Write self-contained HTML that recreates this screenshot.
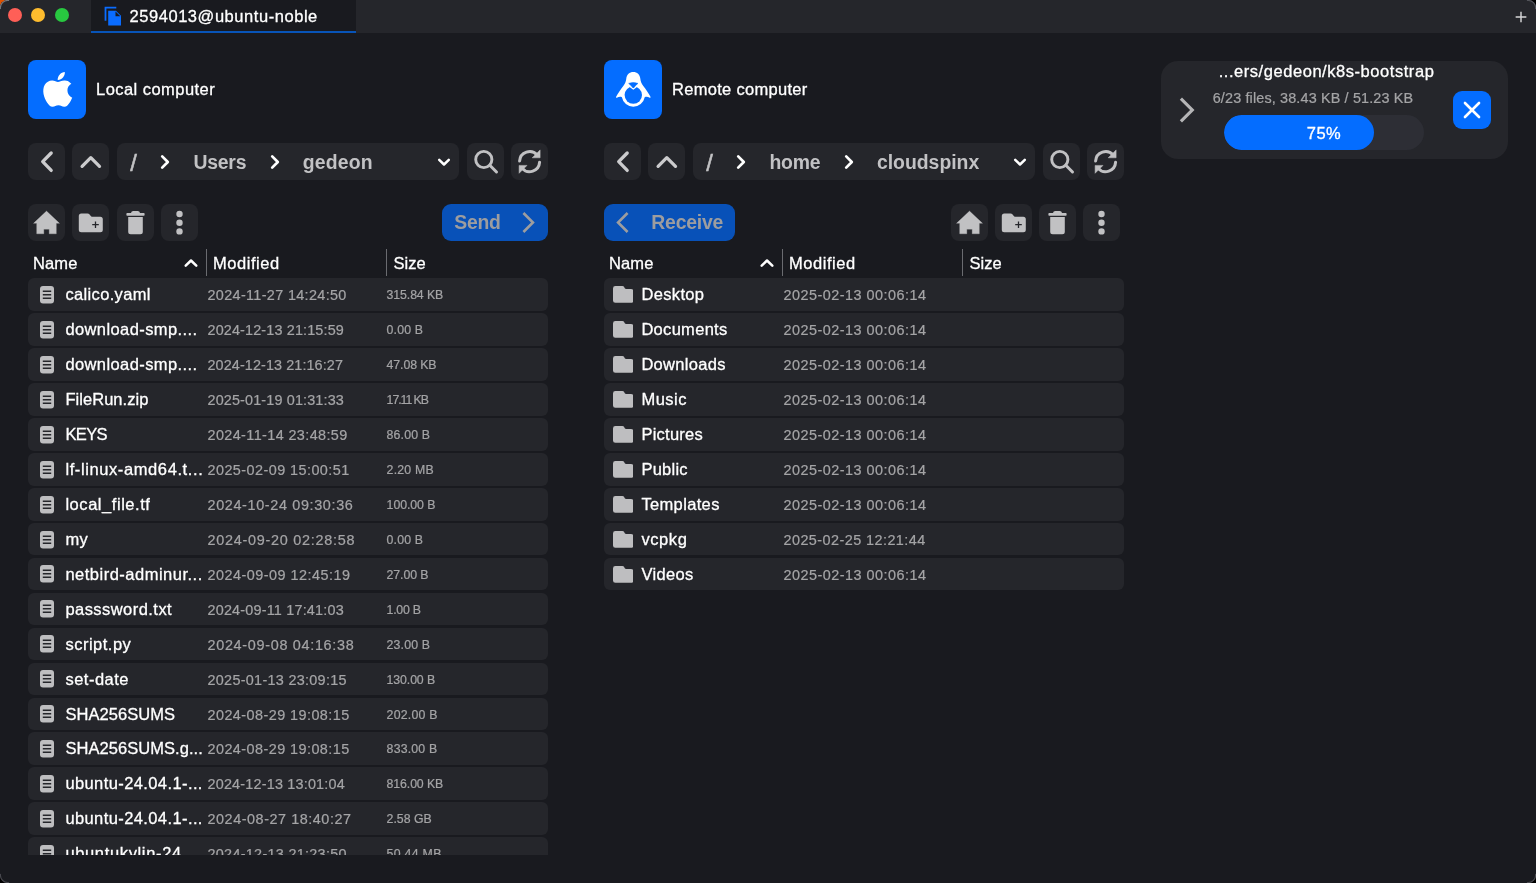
<!DOCTYPE html>
<html lang="en">
<head>
<meta charset="utf-8">
<title>2594013@ubuntu-noble</title>
<style>
*{box-sizing:border-box;margin:0;padding:0}
html,body{width:1536px;height:883px;overflow:hidden;background:#000}
body{font-family:"Liberation Sans",sans-serif;color:#fff;position:relative}
svg{display:block;fill:currentColor}
.win{position:absolute;left:0;top:0;width:1536px;height:883px;background:#191a1f;border-radius:7.5px;overflow:hidden;will-change:transform}
.corner-tl{position:absolute;left:0;top:0;width:10px;height:10px;background:#e05200}
.titlebar{position:absolute;left:0;top:0;width:1536px;height:33px;background:#25262b}
.tl{position:absolute;top:8px;width:14px;height:14px;border-radius:50%}
.tl.r{left:8px;background:#ff5f57}
.tl.y{left:31px;background:#febc2e}
.tl.g{left:55px;background:#28c840}
.tab{position:absolute;left:91px;top:0;width:265.2px;height:33px;background:#191a1f;border-bottom:2px solid #0854b8}
.tab .ticon{position:absolute;left:13px;top:5.5px;width:18px;height:20px}
.tab .ttext{position:absolute;left:38.5px;top:-.4px;line-height:32px;font-size:16.5px;white-space:nowrap}
.plus{position:absolute;left:1513.5px;top:9.8px;width:14px;height:14px;fill:none;stroke:#d6d6d8;stroke-width:1.45}

.panel{position:absolute;top:60px;width:520px}
.panel.l{left:28px}
.panel.r{left:604px}
.os{position:absolute;left:0;top:.3px;width:58.4px;height:58.5px;border-radius:8px;background:#046dff}
.oslabel{position:absolute;left:68px;top:.2px;line-height:58px;font-size:16.5px;white-space:nowrap}
.btn{position:absolute;width:37px;height:37px;border-radius:8px;background:#25262b;color:#c1c1c3}
.btn svg{position:absolute}
.nav{position:absolute;left:0;top:83.3px;width:520px;height:37px}
.pathbox{position:absolute;left:88.6px;top:0;width:342.6px;height:37px;border-radius:8px;background:#25262b;color:#c2c2c4;font-weight:700;font-size:19.4px;line-height:37px;white-space:nowrap}
.pathbox span{position:absolute;top:.5px}
.pathbox .sl{font-size:23.7px;top:1.7px;font-weight:400;-webkit-text-stroke:.55px currentColor}
.pathbox svg{position:absolute;color:#fff}
.tools{position:absolute;left:0;top:143.8px;width:520px;height:37px}
.xfer{position:absolute;top:0;height:37px;border-radius:9px;background:#0851b8;color:#9d9d9f;font-weight:700;font-size:19.4px;line-height:37px;white-space:nowrap}
.xfer span{position:absolute;top:0}
.xfer svg{position:absolute}
.hdr{position:absolute;left:0;top:189px;width:520px;height:27px;font-size:16.5px;line-height:27px;white-space:nowrap}
.hdr span{position:absolute;top:.6px}
.hdr i{position:absolute;top:0;width:1.5px;height:27px;background:#6a6b70}
.hdr svg{position:absolute;color:#fff}
.list{position:absolute;left:0;top:218.3px;width:520px;height:577px;overflow:hidden}
.row{position:relative;height:32.6px;margin-bottom:2.35px;border-radius:6px;background:#25262b;white-space:nowrap}
.row span{position:absolute;top:0;line-height:32.6px}
.fi{left:11.7px;top:7.7px !important;width:14px;height:18px;color:#bebec0}
.fo{left:8.7px;top:8.2px !important;width:20.4px;height:16.8px;color:#bebec0}
.nm{left:37.4px;font-size:16.5px}
.dt{left:179.5px;top:1px !important;font-size:14.4px;color:#a4a4a6}
.sz{left:358.6px;top:1px !important;font-size:12.3px;color:#a4a4a6}

.job{position:absolute;left:1161px;top:60.6px;width:347px;height:98.8px;border-radius:17px;background:#25262b}
.job .jt{position:absolute;left:0;width:331px;top:-.6px;text-align:center;line-height:22px;font-size:16.5px;white-space:nowrap}
.job .js{position:absolute;left:0;width:304px;top:27px;text-align:center;line-height:20px;font-size:14.4px;color:#a4a4a6;white-space:nowrap}
.job .bar{position:absolute;left:63px;top:54.4px;width:200px;height:35px;border-radius:18px;background:#2d2e35;overflow:hidden}
.job .fill{position:absolute;left:0;top:0;width:150px;height:35px;border-radius:18px;background:#046dff}
.job .pct{position:absolute;left:0;top:.6px;width:200px;text-align:center;line-height:35px;font-size:16.5px}
.job .chev{position:absolute;left:11px;top:34.4px;width:30px;height:30px;color:#b5b5b7}
.job .x{position:absolute;left:292px;top:30.5px;width:38px;height:38px;border-radius:9px;background:#046dff;color:#fff}
.job .x svg{position:absolute;left:6px;top:6px;width:26px;height:26px}
.bi{left:0;top:0;width:37px;height:37px}
.rim{position:absolute;width:10px;height:10px;fill:none;stroke:rgba(170,170,178,.34);stroke-width:1.1;stroke-linecap:round}
.nm,.oslabel,.ttext,.hdr span,.job .jt,.job .pct{-webkit-text-stroke:.3px currentColor}
.dt,.sz,.job .js{-webkit-text-stroke:.22px currentColor}

</style>
</head>
<body>
<div class="corner-tl"></div>
<div class="win">
  <div class="titlebar">
    <span class="tl r"></span><span class="tl y"></span><span class="tl g"></span>
    <div class="tab">
      <svg class="ticon" viewBox="0 0 18 20"><path d="M1.500 14.800V1.650h10.800" fill="none" stroke="#0a6cff" stroke-width="1.800"/><path d="M4.200 4.700h7.800l5 5V19.500H4.200z" fill="#0a6cff"/><path d="M11.500 5.500v4.800h4.800z" fill="#191a1f"/></svg>
      <span class="ttext" style="letter-spacing:0.55px">2594013@ubuntu-noble</span>
    </div>
    <svg class="plus" viewBox="0 0 14 14"><path d="M1.650 7H12.350M7 1.650V12.350"/></svg>
  </div>

  <section class="panel l">
    <div class="os"><svg viewBox="0 0 24 24" preserveAspectRatio="none" style="position:absolute;left:11.600px;top:11.800px;width:35.500px;height:34.800px;color:#fff"><path d="M12.152 6.896c-.948 0-2.415-1.078-3.96-1.04-2.04.027-3.91 1.183-4.961 3.014-2.117 3.675-.546 9.103 1.519 12.09 1.013 1.454 2.208 3.09 3.792 3.039 1.52-.065 2.09-.987 3.935-.987 1.831 0 2.35.987 3.96.948 1.637-.026 2.676-1.48 3.676-2.948 1.156-1.688 1.636-3.325 1.662-3.415-.039-.013-3.182-1.221-3.22-4.857-.026-3.04 2.48-4.494 2.597-4.559-1.429-2.09-3.623-2.324-4.39-2.376-2-.156-3.675 1.09-4.61 1.09zM15.53 3.83c.843-1.012 1.4-2.427 1.245-3.83-1.207.052-2.662.805-3.532 1.818-.78.896-1.454 2.338-1.273 3.714 1.338.104 2.715-.688 3.559-1.701"/></svg></div>
    <div class="oslabel" style="letter-spacing:0.45px">Local computer</div>
    <div class="nav">
      <div class="btn" style="left:0"><svg viewBox="0 0 37 37" class="bi"><path d="M23.200 10 L14.700 18.700 L23.200 27.400" fill="none" stroke="#cbcbcd" stroke-width="3.300" stroke-linecap="round" stroke-linejoin="round"/></svg></div>
      <div class="btn" style="left:44.3px"><svg viewBox="0 0 37 37" class="bi"><path d="M10.100 23.300 L18.800 14.700 L27.500 23.300" fill="none" stroke="#cbcbcd" stroke-width="3.300" stroke-linecap="round" stroke-linejoin="round"/></svg></div>
      <div class="pathbox"><span class="sl" style="left:13.600px">/</span><svg style="left:36.4px;top:6.5px;width:24px;height:24px" viewBox="0 0 24 24"><path d="M9.200 6.400 L14.800 12 L9.200 17.600" fill="none" stroke="currentColor" stroke-width="2.700" stroke-linecap="round" stroke-linejoin="round"/></svg><span style="left:76.800px;letter-spacing:-0.2px">Users</span><svg style="left:146.4px;top:6.5px;width:24px;height:24px" viewBox="0 0 24 24"><path d="M9.200 6.400 L14.800 12 L9.200 17.600" fill="none" stroke="currentColor" stroke-width="2.700" stroke-linecap="round" stroke-linejoin="round"/></svg><span style="left:186.200px;letter-spacing:0.15px">gedeon</span><svg style="left:315.400px;top:6.5px;width:24px;height:24px" viewBox="0 0 24 24"><path d="M7.200 9.800 L12 14.500 L16.800 9.800" fill="none" stroke="currentColor" stroke-width="2.500" stroke-linecap="round" stroke-linejoin="round"/></svg></div>
      <div class="btn" style="left:438.700px"><svg viewBox="0 0 37 37" class="bi"><circle cx="16.800" cy="16.500" r="8.100" fill="none" stroke="currentColor" stroke-width="2.900"/><path d="M22.800 22.200 L29.500 29" stroke="currentColor" stroke-width="3" stroke-linecap="round"/></svg></div>
      <div class="btn" style="left:483.200px"><svg viewBox="0 0 37 37" class="bi"><path d="M8.600 18 A10 10 0 0 1 26.200 12.100" fill="none" stroke="currentColor" stroke-width="3" stroke-linecap="round"/><path d="M28.600 19.200 A10 10 0 0 1 11 25.100" fill="none" stroke="currentColor" stroke-width="3" stroke-linecap="round"/><path d="M29.100 6.900 V14.800 H21.200 Z" stroke="currentColor" stroke-width="0.500" stroke-linejoin="round"/><path d="M8.100 30.300 V22.400 H16 Z" stroke="currentColor" stroke-width="0.500" stroke-linejoin="round"/></svg></div>
    </div>
    <div class="tools">
      <div class="btn" style="left:0"><svg viewBox="0 0 37 37" class="bi"><path d="M18.5 7.1 L31.5 19.3 H28.3 V29.8 H21.2 V25.2 H15.8 V29.8 H8.7 V19.3 H5.5 Z" stroke="currentColor" stroke-width="0.3" stroke-linejoin="round"/></svg></div>
      <div class="btn" style="left:44.3px"><svg viewBox="0 0 37 37" class="bi"><path d="M9.300 9.400 H15.500 Q16.800 9.400 17.600 10.400 L18.800 11.900 Q19.600 12.800 20.800 12.800 H28.300 Q30.800 12.800 30.800 15.300 V25.700 Q30.800 28.200 28.300 28.200 H9.300 Q6.800 28.200 6.800 25.700 V11.900 Q6.800 9.400 9.300 9.400 Z"/><path d="M23.500 17.400 V24 M20.200 20.700 H26.800" stroke="#25262b" stroke-width="1.300" fill="none"/></svg></div>
      <div class="btn" style="left:88.6px"><svg viewBox="0 0 37 37" class="bi"><path d="M10.200 8.900 H14 Q14.300 6.900 16.300 6.900 H20.700 Q22.700 6.900 23 8.900 H26.800 Q27.600 8.900 27.600 9.700 V11 Q27.600 11.800 26.800 11.800 H10.200 Q9.400 11.800 9.400 11 V9.700 Q9.400 8.900 10.200 8.900 Z M11.200 13 H25.800 V27.800 Q25.800 30.300 23.300 30.300 H13.700 Q11.200 30.300 11.200 27.800 Z"/></svg></div>
      <div class="btn" style="left:132.9px"><svg viewBox="0 0 37 37" class="bi"><circle cx="18.500" cy="10" r="3.200"/><circle cx="18.500" cy="18.700" r="3.200"/><circle cx="18.500" cy="27.400" r="3.200"/></svg></div>
      <div class="xfer" style="left:414px;width:106px"><span style="left:12.300px;letter-spacing:-0.25px">Send</span><svg style="left:74.3px;top:6.3px;width:25px;height:25px" viewBox="0 0 24 24"><path d="M6.230 20.230L8 22l10-10L8 2 6.230 3.770 14.460 12z"/></svg></div>
    </div>
    <div class="hdr"><span style="left:5px;letter-spacing:0.1px">Name</span><svg style="left:150.7px;top:1.5px;width:24px;height:24px" viewBox="0 0 24 24"><path d="M6.700 14.700 L12 9.500 L17.300 14.700" fill="none" stroke="currentColor" stroke-width="2.500" stroke-linecap="round" stroke-linejoin="round"/></svg><i style="left:177.800px"></i><span style="left:185px;letter-spacing:0.55px">Modified</span><i style="left:357.5px"></i><span style="left:365.500px;letter-spacing:0px">Size</span></div>
    <div class="list">
<div class="row"><span class="fi"><svg viewBox="0 0 14 18"><rect x="0" y="0" width="14" height="17.600" rx="3" ry="3"/><path d="M2.800 5.300h8.400M2.800 8.800h8.400M2.800 12.300h8.400" stroke="#25262b" stroke-width="1.500" fill="none"/></svg></span><span class="nm" style="letter-spacing:0.35px">calico.yaml</span><span class="dt" style="letter-spacing:0.35px">2024-11-27 14:24:50</span><span class="sz" style="letter-spacing:-0.1px">315.84 KB</span></div>
<div class="row"><span class="fi"><svg viewBox="0 0 14 18"><rect x="0" y="0" width="14" height="17.600" rx="3" ry="3"/><path d="M2.800 5.300h8.400M2.800 8.800h8.400M2.800 12.300h8.400" stroke="#25262b" stroke-width="1.500" fill="none"/></svg></span><span class="nm" style="letter-spacing:0.4px">download-smp....</span><span class="dt" style="letter-spacing:0.15px">2024-12-13 21:15:59</span><span class="sz" style="letter-spacing:0.15px">0.00 B</span></div>
<div class="row"><span class="fi"><svg viewBox="0 0 14 18"><rect x="0" y="0" width="14" height="17.600" rx="3" ry="3"/><path d="M2.800 5.300h8.400M2.800 8.800h8.400M2.800 12.300h8.400" stroke="#25262b" stroke-width="1.500" fill="none"/></svg></span><span class="nm" style="letter-spacing:0.4px">download-smp....</span><span class="dt" style="letter-spacing:0.1px">2024-12-13 21:16:27</span><span class="sz" style="letter-spacing:-0.1px">47.08 KB</span></div>
<div class="row"><span class="fi"><svg viewBox="0 0 14 18"><rect x="0" y="0" width="14" height="17.600" rx="3" ry="3"/><path d="M2.800 5.300h8.400M2.800 8.800h8.400M2.800 12.300h8.400" stroke="#25262b" stroke-width="1.500" fill="none"/></svg></span><span class="nm" style="letter-spacing:0.05px">FileRun.zip</span><span class="dt" style="letter-spacing:0.15px">2025-01-19 01:31:33</span><span class="sz" style="letter-spacing:-1.05px">17.11 KB</span></div>
<div class="row"><span class="fi"><svg viewBox="0 0 14 18"><rect x="0" y="0" width="14" height="17.600" rx="3" ry="3"/><path d="M2.800 5.300h8.400M2.800 8.800h8.400M2.800 12.300h8.400" stroke="#25262b" stroke-width="1.500" fill="none"/></svg></span><span class="nm" style="letter-spacing:-0.6px">KEYS</span><span class="dt" style="letter-spacing:0.4px">2024-11-14 23:48:59</span><span class="sz" style="letter-spacing:0.15px">86.00 B</span></div>
<div class="row"><span class="fi"><svg viewBox="0 0 14 18"><rect x="0" y="0" width="14" height="17.600" rx="3" ry="3"/><path d="M2.800 5.300h8.400M2.800 8.800h8.400M2.800 12.300h8.400" stroke="#25262b" stroke-width="1.500" fill="none"/></svg></span><span class="nm" style="letter-spacing:0.6px">lf-linux-amd64.t...</span><span class="dt" style="letter-spacing:0.45px">2025-02-09 15:00:51</span><span class="sz" style="letter-spacing:0.2px">2.20 MB</span></div>
<div class="row"><span class="fi"><svg viewBox="0 0 14 18"><rect x="0" y="0" width="14" height="17.600" rx="3" ry="3"/><path d="M2.800 5.300h8.400M2.800 8.800h8.400M2.800 12.300h8.400" stroke="#25262b" stroke-width="1.500" fill="none"/></svg></span><span class="nm" style="letter-spacing:0.55px">local_file.tf</span><span class="dt" style="letter-spacing:0.65px">2024-10-24 09:30:36</span><span class="sz" style="letter-spacing:-0.05px">100.00 B</span></div>
<div class="row"><span class="fi"><svg viewBox="0 0 14 18"><rect x="0" y="0" width="14" height="17.600" rx="3" ry="3"/><path d="M2.800 5.300h8.400M2.800 8.800h8.400M2.800 12.300h8.400" stroke="#25262b" stroke-width="1.500" fill="none"/></svg></span><span class="nm" style="letter-spacing:0.4px">my</span><span class="dt" style="letter-spacing:0.75px">2024-09-20 02:28:58</span><span class="sz" style="letter-spacing:0.15px">0.00 B</span></div>
<div class="row"><span class="fi"><svg viewBox="0 0 14 18"><rect x="0" y="0" width="14" height="17.600" rx="3" ry="3"/><path d="M2.800 5.300h8.400M2.800 8.800h8.400M2.800 12.300h8.400" stroke="#25262b" stroke-width="1.500" fill="none"/></svg></span><span class="nm" style="letter-spacing:0.5px">netbird-adminur...</span><span class="dt" style="letter-spacing:0.5px">2024-09-09 12:45:19</span><span class="sz" style="letter-spacing:-0.1px">27.00 B</span></div>
<div class="row"><span class="fi"><svg viewBox="0 0 14 18"><rect x="0" y="0" width="14" height="17.600" rx="3" ry="3"/><path d="M2.800 5.300h8.400M2.800 8.800h8.400M2.800 12.300h8.400" stroke="#25262b" stroke-width="1.500" fill="none"/></svg></span><span class="nm" style="letter-spacing:0.45px">passsword.txt</span><span class="dt" style="letter-spacing:0.2px">2024-09-11 17:41:03</span><span class="sz" style="letter-spacing:-0.25px">1.00 B</span></div>
<div class="row"><span class="fi"><svg viewBox="0 0 14 18"><rect x="0" y="0" width="14" height="17.600" rx="3" ry="3"/><path d="M2.800 5.300h8.400M2.800 8.800h8.400M2.800 12.300h8.400" stroke="#25262b" stroke-width="1.500" fill="none"/></svg></span><span class="nm" style="letter-spacing:0.5px">script.py</span><span class="dt" style="letter-spacing:0.7px">2024-09-08 04:16:38</span><span class="sz" style="letter-spacing:0.15px">23.00 B</span></div>
<div class="row"><span class="fi"><svg viewBox="0 0 14 18"><rect x="0" y="0" width="14" height="17.600" rx="3" ry="3"/><path d="M2.800 5.300h8.400M2.800 8.800h8.400M2.800 12.300h8.400" stroke="#25262b" stroke-width="1.500" fill="none"/></svg></span><span class="nm" style="letter-spacing:0.5px">set-date</span><span class="dt" style="letter-spacing:0.3px">2025-01-13 23:09:15</span><span class="sz" style="letter-spacing:-0.1px">130.00 B</span></div>
<div class="row"><span class="fi"><svg viewBox="0 0 14 18"><rect x="0" y="0" width="14" height="17.600" rx="3" ry="3"/><path d="M2.800 5.300h8.400M2.800 8.800h8.400M2.800 12.300h8.400" stroke="#25262b" stroke-width="1.500" fill="none"/></svg></span><span class="nm" style="letter-spacing:0.05px">SHA256SUMS</span><span class="dt" style="letter-spacing:0.45px">2024-08-29 19:08:15</span><span class="sz" style="letter-spacing:0.25px">202.00 B</span></div>
<div class="row"><span class="fi"><svg viewBox="0 0 14 18"><rect x="0" y="0" width="14" height="17.600" rx="3" ry="3"/><path d="M2.800 5.300h8.400M2.800 8.800h8.400M2.800 12.300h8.400" stroke="#25262b" stroke-width="1.500" fill="none"/></svg></span><span class="nm" style="letter-spacing:0.05px">SHA256SUMS.g...</span><span class="dt" style="letter-spacing:0.45px">2024-08-29 19:08:15</span><span class="sz" style="letter-spacing:0.2px">833.00 B</span></div>
<div class="row"><span class="fi"><svg viewBox="0 0 14 18"><rect x="0" y="0" width="14" height="17.600" rx="3" ry="3"/><path d="M2.800 5.300h8.400M2.800 8.800h8.400M2.800 12.300h8.400" stroke="#25262b" stroke-width="1.500" fill="none"/></svg></span><span class="nm" style="letter-spacing:0.4px">ubuntu-24.04.1-...</span><span class="dt" style="letter-spacing:0.2px">2024-12-13 13:01:04</span><span class="sz" style="letter-spacing:-0.1px">816.00 KB</span></div>
<div class="row"><span class="fi"><svg viewBox="0 0 14 18"><rect x="0" y="0" width="14" height="17.600" rx="3" ry="3"/><path d="M2.800 5.300h8.400M2.800 8.800h8.400M2.800 12.300h8.400" stroke="#25262b" stroke-width="1.500" fill="none"/></svg></span><span class="nm" style="letter-spacing:0.4px">ubuntu-24.04.1-...</span><span class="dt" style="letter-spacing:0.55px">2024-08-27 18:40:27</span><span class="sz" style="letter-spacing:0px">2.58 GB</span></div>
<div class="row"><span class="fi"><svg viewBox="0 0 14 18"><rect x="0" y="0" width="14" height="17.600" rx="3" ry="3"/><path d="M2.800 5.300h8.400M2.800 8.800h8.400M2.800 12.300h8.400" stroke="#25262b" stroke-width="1.500" fill="none"/></svg></span><span class="nm" style="letter-spacing:0.65px">ubuntukylin-24....</span><span class="dt" style="letter-spacing:0.3px">2024-12-13 21:23:50</span><span class="sz" style="letter-spacing:0.3px">50.44 MB</span></div>
    </div>
  </section>

  <section class="panel r">
    <div class="os"><svg viewBox="0 0 58.500 58.500" style="position:absolute;left:0;top:0;width:58.500px;height:58.500px"><path d="M29.300 11.900 C25.500 11.900 22.600 14.600 22.300 18.600 C22.100 21.500 21 23.600 19.300 26 C16.500 29.800 13.600 33.600 12 37 C11.800 37.600 12.300 37.900 12.900 37.700 C14.600 36.900 16.200 36.400 17.900 37.200 A11.600 11.600 0 0 0 40.700 37.200 C42.400 36.400 44 36.900 45.700 37.700 C46.300 37.900 46.800 37.600 46.600 37 C45 33.600 42.100 29.800 39.300 26 C37.600 23.600 36.500 21.500 36.300 18.600 C36 14.600 33.100 11.900 29.300 11.900 Z" fill="#fff"/><circle cx="29.300" cy="35.050" r="8.700" fill="#046dff"/><path d="M24.700 23.400 Q29.300 21.800 33.900 23.400 L29.300 27.700 Z" fill="#046dff" stroke="#046dff" stroke-width=".6" stroke-linejoin="round"/><path d="M24.300 25.300 L29.300 29.100 L34.300 25.300" fill="none" stroke="#fff" stroke-width="1.200" stroke-linejoin="round"/></svg></div>
    <div class="oslabel" style="letter-spacing:0.3px">Remote computer</div>
    <div class="nav">
      <div class="btn" style="left:0"><svg viewBox="0 0 37 37" class="bi"><path d="M23.200 10 L14.700 18.700 L23.200 27.400" fill="none" stroke="#cbcbcd" stroke-width="3.300" stroke-linecap="round" stroke-linejoin="round"/></svg></div>
      <div class="btn" style="left:44.3px"><svg viewBox="0 0 37 37" class="bi"><path d="M10.100 23.300 L18.800 14.700 L27.500 23.300" fill="none" stroke="#cbcbcd" stroke-width="3.300" stroke-linecap="round" stroke-linejoin="round"/></svg></div>
      <div class="pathbox"><span class="sl" style="left:13.600px">/</span><svg style="left:36.4px;top:6.5px;width:24px;height:24px" viewBox="0 0 24 24"><path d="M9.200 6.400 L14.800 12 L9.200 17.600" fill="none" stroke="currentColor" stroke-width="2.700" stroke-linecap="round" stroke-linejoin="round"/></svg><span style="left:76.800px;letter-spacing:-0.2px">home</span><svg style="left:144.4px;top:6.5px;width:24px;height:24px" viewBox="0 0 24 24"><path d="M9.200 6.400 L14.800 12 L9.200 17.600" fill="none" stroke="currentColor" stroke-width="2.700" stroke-linecap="round" stroke-linejoin="round"/></svg><span style="left:184.300px;letter-spacing:0px">cloudspinx</span><svg style="left:315.400px;top:6.5px;width:24px;height:24px" viewBox="0 0 24 24"><path d="M7.200 9.800 L12 14.500 L16.800 9.800" fill="none" stroke="currentColor" stroke-width="2.500" stroke-linecap="round" stroke-linejoin="round"/></svg></div>
      <div class="btn" style="left:438.700px"><svg viewBox="0 0 37 37" class="bi"><circle cx="16.800" cy="16.500" r="8.100" fill="none" stroke="currentColor" stroke-width="2.900"/><path d="M22.800 22.200 L29.500 29" stroke="currentColor" stroke-width="3" stroke-linecap="round"/></svg></div>
      <div class="btn" style="left:483.200px"><svg viewBox="0 0 37 37" class="bi"><path d="M8.600 18 A10 10 0 0 1 26.200 12.100" fill="none" stroke="currentColor" stroke-width="3" stroke-linecap="round"/><path d="M28.600 19.200 A10 10 0 0 1 11 25.100" fill="none" stroke="currentColor" stroke-width="3" stroke-linecap="round"/><path d="M29.100 6.900 V14.800 H21.200 Z" stroke="currentColor" stroke-width="0.500" stroke-linejoin="round"/><path d="M8.100 30.300 V22.400 H16 Z" stroke="currentColor" stroke-width="0.500" stroke-linejoin="round"/></svg></div>
    </div>
    <div class="tools">
      <div class="xfer" style="left:0;width:131px"><svg style="left:6.4px;top:6.3px;width:25px;height:25px" viewBox="0 0 24 24"><path d="M17.770 3.770L16 2 6 12l10 10 1.770-1.770L9.540 12z"/></svg><span style="left:47.300px;letter-spacing:-0.2px">Receive</span></div>
      <div class="btn" style="left:346.5px"><svg viewBox="0 0 37 37" class="bi"><path d="M18.5 7.1 L31.5 19.3 H28.3 V29.8 H21.2 V25.2 H15.8 V29.8 H8.7 V19.3 H5.5 Z" stroke="currentColor" stroke-width="0.3" stroke-linejoin="round"/></svg></div>
      <div class="btn" style="left:390.8px"><svg viewBox="0 0 37 37" class="bi"><path d="M9.300 9.400 H15.500 Q16.800 9.400 17.600 10.400 L18.800 11.900 Q19.600 12.800 20.800 12.800 H28.300 Q30.800 12.800 30.800 15.300 V25.700 Q30.800 28.200 28.300 28.200 H9.300 Q6.800 28.200 6.800 25.700 V11.900 Q6.800 9.400 9.300 9.400 Z"/><path d="M23.500 17.400 V24 M20.200 20.700 H26.800" stroke="#25262b" stroke-width="1.300" fill="none"/></svg></div>
      <div class="btn" style="left:435.1px"><svg viewBox="0 0 37 37" class="bi"><path d="M10.200 8.900 H14 Q14.300 6.900 16.300 6.900 H20.700 Q22.700 6.900 23 8.900 H26.800 Q27.600 8.900 27.600 9.700 V11 Q27.600 11.800 26.800 11.800 H10.200 Q9.400 11.800 9.400 11 V9.700 Q9.400 8.900 10.200 8.900 Z M11.200 13 H25.800 V27.800 Q25.800 30.300 23.300 30.300 H13.700 Q11.200 30.300 11.200 27.800 Z"/></svg></div>
      <div class="btn" style="left:479.4px"><svg viewBox="0 0 37 37" class="bi"><circle cx="18.500" cy="10" r="3.200"/><circle cx="18.500" cy="18.700" r="3.200"/><circle cx="18.500" cy="27.400" r="3.200"/></svg></div>
    </div>
    <div class="hdr"><span style="left:5px;letter-spacing:0.1px">Name</span><svg style="left:150.7px;top:1.5px;width:24px;height:24px" viewBox="0 0 24 24"><path d="M6.700 14.700 L12 9.500 L17.300 14.700" fill="none" stroke="currentColor" stroke-width="2.500" stroke-linecap="round" stroke-linejoin="round"/></svg><i style="left:177.800px"></i><span style="left:185px;letter-spacing:0.55px">Modified</span><i style="left:357.5px"></i><span style="left:365.500px;letter-spacing:0px">Size</span></div>
    <div class="list">
<div class="row"><span class="fo"><svg viewBox="0 0 20.4 16.8"><path d="M2.400 0 H9.300 Q10.600 0 11.200 1.100 L11.600 1.900 Q12.100 2.900 13.300 2.900 H18 Q20.400 2.900 20.400 5.300 V14.400 Q20.400 16.800 18 16.800 H2.400 Q0 16.800 0 14.400 V2.400 Q0 0 2.400 0 Z"/></svg></span><span class="nm" style="letter-spacing:0.35px">Desktop</span><span class="dt" style="letter-spacing:0.5px">2025-02-13 00:06:14</span></div>
<div class="row"><span class="fo"><svg viewBox="0 0 20.4 16.8"><path d="M2.400 0 H9.300 Q10.600 0 11.200 1.100 L11.600 1.900 Q12.100 2.900 13.300 2.900 H18 Q20.400 2.900 20.400 5.300 V14.400 Q20.400 16.800 18 16.800 H2.400 Q0 16.800 0 14.400 V2.400 Q0 0 2.400 0 Z"/></svg></span><span class="nm" style="letter-spacing:0.3px">Documents</span><span class="dt" style="letter-spacing:0.5px">2025-02-13 00:06:14</span></div>
<div class="row"><span class="fo"><svg viewBox="0 0 20.4 16.8"><path d="M2.400 0 H9.300 Q10.600 0 11.200 1.100 L11.600 1.900 Q12.100 2.900 13.300 2.900 H18 Q20.400 2.900 20.400 5.300 V14.400 Q20.400 16.800 18 16.800 H2.400 Q0 16.800 0 14.400 V2.400 Q0 0 2.400 0 Z"/></svg></span><span class="nm" style="letter-spacing:0.3px">Downloads</span><span class="dt" style="letter-spacing:0.5px">2025-02-13 00:06:14</span></div>
<div class="row"><span class="fo"><svg viewBox="0 0 20.4 16.8"><path d="M2.400 0 H9.300 Q10.600 0 11.200 1.100 L11.600 1.900 Q12.100 2.900 13.300 2.900 H18 Q20.400 2.900 20.400 5.300 V14.400 Q20.400 16.800 18 16.800 H2.400 Q0 16.800 0 14.400 V2.400 Q0 0 2.400 0 Z"/></svg></span><span class="nm" style="letter-spacing:0.5px">Music</span><span class="dt" style="letter-spacing:0.5px">2025-02-13 00:06:14</span></div>
<div class="row"><span class="fo"><svg viewBox="0 0 20.4 16.8"><path d="M2.400 0 H9.300 Q10.600 0 11.200 1.100 L11.600 1.900 Q12.100 2.900 13.300 2.900 H18 Q20.400 2.900 20.400 5.300 V14.400 Q20.400 16.800 18 16.800 H2.400 Q0 16.800 0 14.400 V2.400 Q0 0 2.400 0 Z"/></svg></span><span class="nm" style="letter-spacing:0.25px">Pictures</span><span class="dt" style="letter-spacing:0.5px">2025-02-13 00:06:14</span></div>
<div class="row"><span class="fo"><svg viewBox="0 0 20.4 16.8"><path d="M2.400 0 H9.300 Q10.600 0 11.200 1.100 L11.600 1.900 Q12.100 2.900 13.300 2.900 H18 Q20.400 2.900 20.400 5.300 V14.400 Q20.400 16.800 18 16.800 H2.400 Q0 16.800 0 14.400 V2.400 Q0 0 2.400 0 Z"/></svg></span><span class="nm" style="letter-spacing:0.25px">Public</span><span class="dt" style="letter-spacing:0.5px">2025-02-13 00:06:14</span></div>
<div class="row"><span class="fo"><svg viewBox="0 0 20.4 16.8"><path d="M2.400 0 H9.300 Q10.600 0 11.200 1.100 L11.600 1.900 Q12.100 2.900 13.300 2.900 H18 Q20.400 2.900 20.400 5.300 V14.400 Q20.400 16.800 18 16.800 H2.400 Q0 16.800 0 14.400 V2.400 Q0 0 2.400 0 Z"/></svg></span><span class="nm" style="letter-spacing:0.35px">Templates</span><span class="dt" style="letter-spacing:0.5px">2025-02-13 00:06:14</span></div>
<div class="row"><span class="fo"><svg viewBox="0 0 20.4 16.8"><path d="M2.400 0 H9.300 Q10.600 0 11.200 1.100 L11.600 1.900 Q12.100 2.900 13.300 2.900 H18 Q20.400 2.900 20.400 5.300 V14.400 Q20.400 16.800 18 16.800 H2.400 Q0 16.800 0 14.400 V2.400 Q0 0 2.400 0 Z"/></svg></span><span class="nm" style="letter-spacing:0.6px">vcpkg</span><span class="dt" style="letter-spacing:0.45px">2025-02-25 12:21:44</span></div>
<div class="row"><span class="fo"><svg viewBox="0 0 20.4 16.8"><path d="M2.400 0 H9.300 Q10.600 0 11.200 1.100 L11.600 1.900 Q12.100 2.900 13.300 2.900 H18 Q20.400 2.900 20.400 5.300 V14.400 Q20.400 16.800 18 16.800 H2.400 Q0 16.800 0 14.400 V2.400 Q0 0 2.400 0 Z"/></svg></span><span class="nm" style="letter-spacing:0.35px">Videos</span><span class="dt" style="letter-spacing:0.5px">2025-02-13 00:06:14</span></div>
    </div>
  </section>

  <aside class="job">
    <div class="jt" style="letter-spacing:0.55px">...ers/gedeon/k8s-bootstrap</div>
    <div class="js" style="letter-spacing:0.15px">6/23 files, 38.43 KB / 51.23 KB</div>
    <div class="bar"><div class="fill"></div><div class="pct" style="letter-spacing:0.5px">75%</div></div>
    <div class="chev"><svg viewBox="0 0 24 24"><path d="M6.230 20.230L8 22l10-10L8 2 6.230 3.770 14.460 12z"/></svg></div>
    <div class="x"><svg viewBox="0 0 24 24"><path d="M5.500 5.500L18.500 18.500M18.500 5.500L5.500 18.500" stroke="currentColor" stroke-width="2.400" stroke-linecap="round" fill="none"/></svg></div>
  </aside>
</div>
<svg class="rim" style="left:0;top:0;stroke:rgba(185,185,190,.55)" viewBox="0 0 10 10"><path d="M0.400 8.600 V7.700 A7.300 7.300 0 0 1 7.700 0.400 H8.600"/></svg>
<svg class="rim" style="right:0;top:0" viewBox="0 0 10 10"><path d="M1.400 0.400 H2.300 A7.300 7.300 0 0 1 9.600 7.700 V8.600"/></svg>
<svg class="rim" style="left:0;bottom:0" viewBox="0 0 10 10"><path d="M0.400 1.400 V2.300 A7.300 7.300 0 0 0 7.700 9.600 H8.600"/></svg>
<svg class="rim" style="right:0;bottom:0" viewBox="0 0 10 10"><path d="M9.600 1.400 V2.300 A7.300 7.300 0 0 1 2.300 9.600 H1.400"/></svg>

</body>
</html>
